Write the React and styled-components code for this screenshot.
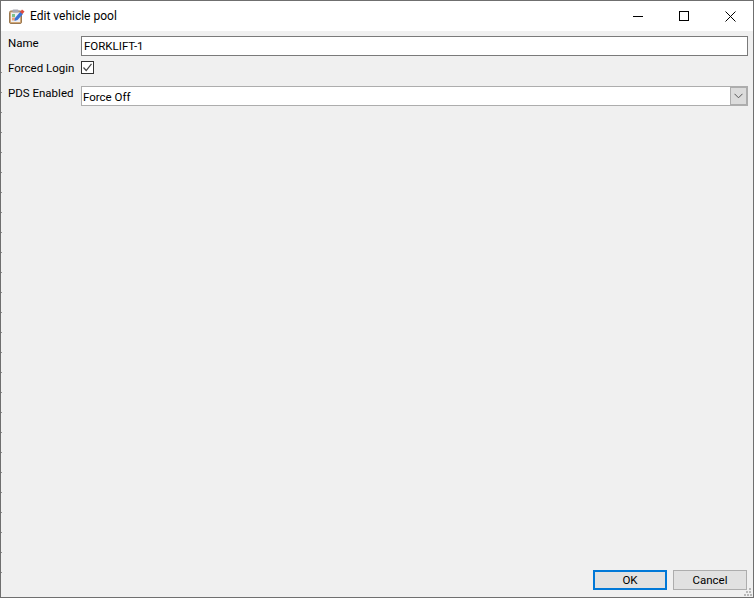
import React from "react";
import styled, { createGlobalStyle } from "styled-components";

const Global = createGlobalStyle`
  html, body { margin: 0; padding: 0; background: #f0f0f0; }
  * { box-sizing: border-box; }
`;

const Win = styled.div`
  width: 754px;
  height: 598px;
  display: flex;
  flex-direction: column;
  background: #f0f0f0;
  border: 1px solid #6f6f6f;
  font-family: "Roboto", "Noto Sans", sans-serif;
  font-size: 11.5px;
  color: #000;
  overflow: hidden;
  position: relative;
`;

const EdgeAccent = styled.div`
  position: absolute;
  top: 31px;
  ${(p) => (p.$side === "left" ? "left: -1px;" : "right: -1px;")}
  width: 1px;
  height: 20px;
  background: #1f4e79;
`;

const EdgeTicks = styled.div`
  position: absolute;
  left: 0;
  top: 71px;
  bottom: 20px;
  width: 1px;
  background: repeating-linear-gradient(to bottom, #8c8c8c 0 1px, transparent 1px 20px);
`;

const TitleBar = styled.div`
  height: 30px;
  flex: none;
  background: #fff;
  display: flex;
  align-items: center;
  padding-left: 8px;
`;

const Title = styled.span`
  margin-left: 5px;
  font-size: 12px;
  flex: 1;
`;

const WinButton = styled.div`
  width: 46px;
  height: 30px;
  display: flex;
  align-items: center;
  justify-content: center;
`;

const Form = styled.div`
  flex: 1;
  display: grid;
  grid-template-columns: 73px 1fr;
  grid-template-rows: 20px 20px 20px;
  row-gap: 5px;
  padding: 5px 5px 0 7px;
  align-content: start;
`;

const Label = styled.label`
  line-height: 14px;
  white-space: nowrap;
`;

const TextInput = styled.div`
  height: 20px;
  background: #fff;
  border: 1px solid #7a7a7a;
  padding-left: 2px;
  line-height: 19px;
`;

const Check = styled.div`
  width: 13px;
  height: 13px;
  background: #fff;
  border: 1px solid #333;
  display: flex;
  align-items: center;
  justify-content: center;
`;

const Combo = styled.div`
  height: 20px;
  background: #fff;
  border: 1px solid #adadad;
  display: flex;
  align-items: stretch;
`;

const ComboText = styled.div`
  flex: 1;
  padding: 1px 0 0 1px;
  line-height: 19px;
`;

const ComboButton = styled.div`
  width: 17px;
  background: #dcdcdc;
  border: 1px solid #adadad;
  display: flex;
  align-items: center;
  justify-content: center;
`;

const Footer = styled.div`
  flex: none;
  display: flex;
  justify-content: flex-end;
  gap: 6px;
  padding: 0 6px 7px 0;
`;

const Btn = styled.div`
  width: 74px;
  height: 20px;
  background: #e1e1e1;
  border: ${(p) => (p.$primary ? "2px solid #0078d7" : "1px solid #adadad")};
  display: flex;
  align-items: center;
  justify-content: center;
`;

const Grip = styled.svg`
  position: absolute;
  right: 1px;
  bottom: 1px;
`;

export default function App() {
  return (
    <Win>
      <Global />
      <EdgeAccent $side="left" />
      <EdgeAccent $side="right" />
      <EdgeTicks />
      <TitleBar>
        <svg width="16" height="16" viewBox="0 0 16 16">
          <rect x="0.5" y="3" width="12" height="12.5" rx="1.5" fill="#d2a878" stroke="#9a7850" />
          <rect x="2" y="4.5" width="9" height="9.5" fill="#eef0f4" />
          <rect x="3.5" y="1.5" width="6" height="3" rx="1" fill="#a8a8b4" />
          <rect x="3" y="6" width="3" height="3" fill="#7cc48c" />
          <rect x="3" y="9.5" width="3" height="3" fill="#e9a37c" />
          <path d="M6 10 L11.5 3.5 L14 6 L8.5 12 L5.5 13 Z" fill="#3a74d6" />
          <path d="M11 4 L13 1.5 L15.5 3.5 L13.5 6 Z" fill="#dd4a3c" />
        </svg>
        <Title>Edit vehicle pool</Title>
        <WinButton>
          <svg width="10" height="10" viewBox="0 0 10 10"><path d="M0 5.5H10" stroke="#000" /></svg>
        </WinButton>
        <WinButton>
          <svg width="10" height="10" viewBox="0 0 10 10"><rect x=".5" y=".5" width="9" height="9" fill="none" stroke="#000" /></svg>
        </WinButton>
        <WinButton>
          <svg width="11" height="11" viewBox="0 0 11 11"><path d="M.5 .5L10.5 10.5M10.5 .5L.5 10.5" stroke="#000" /></svg>
        </WinButton>
      </TitleBar>
      <Form>
        <Label>Name</Label>
        <TextInput>FORKLIFT-1</TextInput>
        <Label>Forced Login</Label>
        <Check>
          <svg width="11" height="11" viewBox="0 0 11 11"><path d="M1.5 5.5L4.2 8.5L9.5 1.8" fill="none" stroke="#444" strokeWidth="1.2" /></svg>
        </Check>
        <Label>PDS Enabled</Label>
        <Combo>
          <ComboText>Force Off</ComboText>
          <ComboButton>
            <svg width="9" height="6" viewBox="0 0 9 6"><path d="M.5 .8L4.5 4.8L8.5 .8" fill="none" stroke="#555" /></svg>
          </ComboButton>
        </Combo>
      </Form>
      <Footer>
        <Btn $primary>OK</Btn>
        <Btn>Cancel</Btn>
      </Footer>
      <Grip width="8" height="8" viewBox="0 0 8 8">
        <g fill="#b8b8b8">
          <rect x="5" y="0" width="2" height="2" />
          <rect x="2" y="3" width="2" height="2" />
          <rect x="5" y="3" width="2" height="2" />
          <rect x="0" y="6" width="2" height="2" />
          <rect x="3" y="6" width="2" height="2" />
          <rect x="6" y="6" width="2" height="2" />
        </g>
      </Grip>
    </Win>
  );
}
